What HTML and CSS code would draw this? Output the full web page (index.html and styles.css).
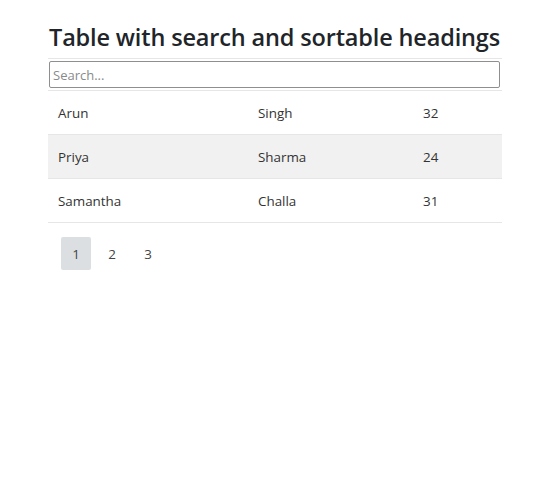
FILE: index.html
```html
<!DOCTYPE html>
<html lang="en">
<head>
<meta charset="utf-8">
<title>Table with search and sortable headings</title>
<link rel="stylesheet" href="styles.css">
</head>
<body>
<main class="container">
  <h2 class="title">Table with search and sortable headings</h2>
  <div class="search-row">
    <input class="search" type="text" placeholder="Search...">
  </div>
  <table class="data">
    <colgroup>
      <col class="c-first">
      <col class="c-last">
      <col class="c-age">
    </colgroup>
    <tbody>
      <tr><td>Arun</td><td>Singh</td><td>32</td></tr>
      <tr class="striped"><td>Priya</td><td>Sharma</td><td>24</td></tr>
      <tr><td>Samantha</td><td>Challa</td><td>31</td></tr>
    </tbody>
  </table>
  <nav class="pager">
    <button class="page active">1</button>
    <button class="page">2</button>
    <button class="page">3</button>
  </nav>
</main>
</body>
</html>
```

FILE: styles.css
```css
html, body {
  margin: 0;
  padding: 0;
  background: #ffffff;
}

body {
  font-family: "Open Sans", "Noto Sans", "Liberation Sans", sans-serif;
  color: #333333;
}

.container {
  width: 454px;
  margin: 0 auto;
  padding-top: 20px;
}

.title {
  margin: 0 0 0 1px;
  font-size: 23.5px;
  font-weight: 600;
  line-height: 34px;
  color: #212529;
  letter-spacing: -0.15px;
  white-space: nowrap;
}

.search-row {
  margin-top: 4px;
  border-top: 1px solid #e6e6e6;
  border-bottom: 1px solid #e6e6e6;
  padding: 2px 2px 2px 1px;
}

.search {
  display: block;
  box-sizing: border-box;
  width: 451px;
  height: 27px;
  margin: 0;
  padding: 0 3px;
  border: 1px solid #8f8f8f;
  border-radius: 2px;
  font-family: inherit;
  font-size: 13px;
  color: #333;
  background: #fff;
  outline: none;
}

.search::placeholder {
  color: #8a8a8a;
}

.data {
  width: 454px;
  border-collapse: collapse;
  table-layout: fixed;
  font-size: 13.4px;
}

.c-first { width: 200px; }
.c-last { width: 165px; }
.c-age { width: 89px; }

.data td {
  height: 43px;
  padding: 0 10px;
  border-bottom: 1px solid #e6e6e6;
  vertical-align: middle;
  color: #333;
}

.data tr.striped td {
  background: #f1f1f1;
}

.pager {
  display: flex;
  gap: 6px;
  padding: 14px 0 0 13px;
}

.page {
  width: 30px;
  height: 33px;
  padding: 0;
  border: 0;
  border-radius: 2px;
  background: transparent;
  font-family: inherit;
  font-size: 13.4px;
  color: #444;
  cursor: pointer;
}

.page.active {
  background: #dcdfe2;
}
```
